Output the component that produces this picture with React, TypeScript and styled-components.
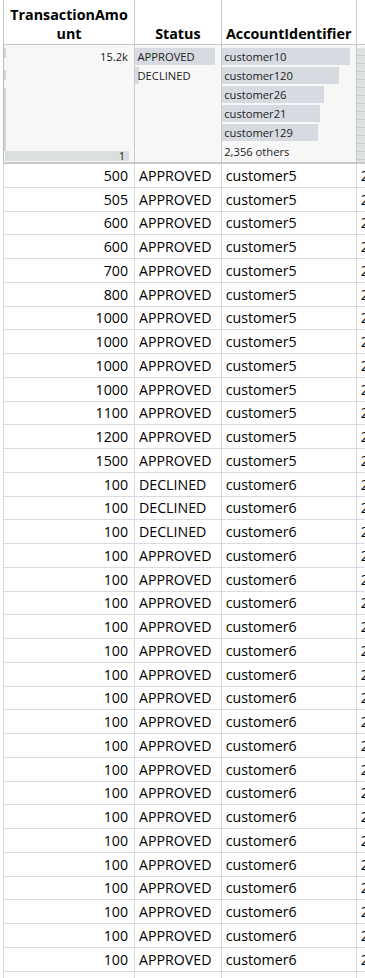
import React from "react";
import styled, { createGlobalStyle } from "styled-components";

const Global = createGlobalStyle`
  html, body {
    margin: 0;
    padding: 0;
    background: #ffffff;
    overflow: hidden;
    width: 365px;
    height: 978px;
  }
  body {
    font-family: "Open Sans", "Noto Sans", "Liberation Sans", sans-serif;
    color: #000;
  }
`;

const COLS = "131px 86.7px 135px 140px";

const Sheet = styled.div`
  margin-left: 3px;
  width: 500px;
`;

const Row = styled.div<{ $edge: string }>`
  display: grid;
  grid-template-columns: ${COLS};
  border-left: 1px solid ${(p) => p.$edge};
  box-sizing: border-box;
`;

const HeaderRow = styled(Row)`
  height: 45px;
  border-bottom: 1px solid #c6c6c6;
`;

const HeaderCell = styled.div`
  box-sizing: border-box;
  border-right: 1px solid #cbcbcb;
  display: flex;
  align-items: flex-end;
  justify-content: center;
  text-align: center;
  font-weight: 700;
  font-size: 14.3px;
  line-height: 19px;
  padding: 0 2px 1.5px;
  white-space: nowrap;
`;

const SummaryRow = styled(Row)`
  height: 119px;
  background: #f7f7f7;
  border-bottom: 2px solid #c8c8c8;
`;

const SummaryCell = styled.div`
  box-sizing: border-box;
  border-right: 1px solid #cbcbcb;
  display: flex;
  flex-direction: column;
  font-size: 11.2px;
  overflow: hidden;
`;

const HistArea = styled.div`
  flex: 1;
  padding: 3px 6px 0 0;
  text-align: right;
  line-height: 17px;
  color: #222;
  background-image: linear-gradient(
    to bottom,
    #d3d8d3 0px,
    #d3d8d3 10px,
    transparent 10px,
    transparent 22px,
    #d3d8d3 22px,
    #d3d8d3 32px,
    transparent 32px,
    transparent 40px,
    #d3d8d3 40px,
    #d3d8d3 100%
  );
  background-size: 2px calc(100% - 3px);
  background-position: 0 3px;
  background-repeat: no-repeat;
`;

const HistBar = styled.div`
  height: 10px;
  margin: 0 5px 1px 1px;
  background: #d9dfdb;
  text-align: right;
  font-size: 11px;
  line-height: 12px;
  padding-right: 4px;
  color: #222;
  display: flex;
  justify-content: flex-end;
  align-items: center;
`;

const BarList = styled.div`
  display: flex;
  flex-direction: column;
  gap: 2px;
  padding-top: 3px;
`;

const BarItem = styled.div`
  height: 17px;
  line-height: 17px;
  padding-left: 2.5px;
  color: #222;
  white-space: nowrap;
  background-image: linear-gradient(#d7dbe1, #d7dbe1);
  background-repeat: no-repeat;
`;

const Others = styled.div`
  height: 19px;
  line-height: 19px;
  padding-left: 2.5px;
  margin-top: 1px;
  color: #222;
`;

const StripeBlock = styled.div`
  margin: 3px 0 0 0;
  height: 114px;
  background-color: #dfe3df;
  background-image: repeating-linear-gradient(
    to bottom,
    transparent 0px,
    transparent 7px,
    #c9cfc9 7px,
    #c9cfc9 8px
  );
`;

const DataRow = styled(Row)`
  height: 23.75px;
  border-bottom: 1px solid #dadae2;
`;

const DataCell = styled.div<{ $align?: "left" | "right" }>`
  box-sizing: border-box;
  border-right: 1px solid #dadae2;
  display: flex;
  align-items: center;
  justify-content: ${(p) => (p.$align === "right" ? "flex-end" : "flex-start")};
  padding: 1px ${(p) => (p.$align === "right" ? "6px" : "0")} 0
    ${(p) => (p.$align === "right" ? "0" : "4px")};
  font-size: 14.2px;
  line-height: 20px;
  white-space: nowrap;
  overflow: hidden;
`;

type Rec = [number, string, string];

const rows: Rec[] = [
  [500, "APPROVED", "customer5"],
  [505, "APPROVED", "customer5"],
  [600, "APPROVED", "customer5"],
  [600, "APPROVED", "customer5"],
  [700, "APPROVED", "customer5"],
  [800, "APPROVED", "customer5"],
  [1000, "APPROVED", "customer5"],
  [1000, "APPROVED", "customer5"],
  [1000, "APPROVED", "customer5"],
  [1000, "APPROVED", "customer5"],
  [1100, "APPROVED", "customer5"],
  [1200, "APPROVED", "customer5"],
  [1500, "APPROVED", "customer5"],
  [100, "DECLINED", "customer6"],
  [100, "DECLINED", "customer6"],
  [100, "DECLINED", "customer6"],
  ...Array.from({ length: 19 }, (): Rec => [100, "APPROVED", "customer6"]),
];

const statusBars: [string, number][] = [
  ["APPROVED", 80],
  ["DECLINED", 4],
];

const accountBars: [string, number][] = [
  ["customer10", 128],
  ["customer120", 117],
  ["customer26", 102],
  ["customer21", 98],
  ["customer129", 96],
];

export default function App() {
  return (
    <>
      <Global />
      <Sheet>
        <HeaderRow $edge="#c8c8c8">
          <HeaderCell>
            TransactionAmo
            <br />
            unt
          </HeaderCell>
          <HeaderCell>Status</HeaderCell>
          <HeaderCell>AccountIdentifier</HeaderCell>
          <HeaderCell />
        </HeaderRow>

        <SummaryRow $edge="#b9bdb9">
          <SummaryCell>
            <HistArea>15.2k</HistArea>
            <HistBar>1</HistBar>
          </SummaryCell>
          <SummaryCell>
            <BarList>
              {statusBars.map(([label, w]) => (
                <BarItem key={label} style={{ backgroundSize: `${w}px 100%` }}>
                  {label}
                </BarItem>
              ))}
            </BarList>
          </SummaryCell>
          <SummaryCell>
            <BarList>
              {accountBars.map(([label, w]) => (
                <BarItem key={label} style={{ backgroundSize: `${w}px 100%` }}>
                  {label}
                </BarItem>
              ))}
            </BarList>
            <Others>2,356 others</Others>
          </SummaryCell>
          <SummaryCell>
            <StripeBlock />
          </SummaryCell>
        </SummaryRow>

        {rows.map(([amt, status, acct], i) => (
          <DataRow key={i} $edge="#d6d6de">
            <DataCell $align="right">{amt}</DataCell>
            <DataCell>{status}</DataCell>
            <DataCell>{acct}</DataCell>
            <DataCell>2020-01-01</DataCell>
          </DataRow>
        ))}
      </Sheet>
    </>
  );
}
